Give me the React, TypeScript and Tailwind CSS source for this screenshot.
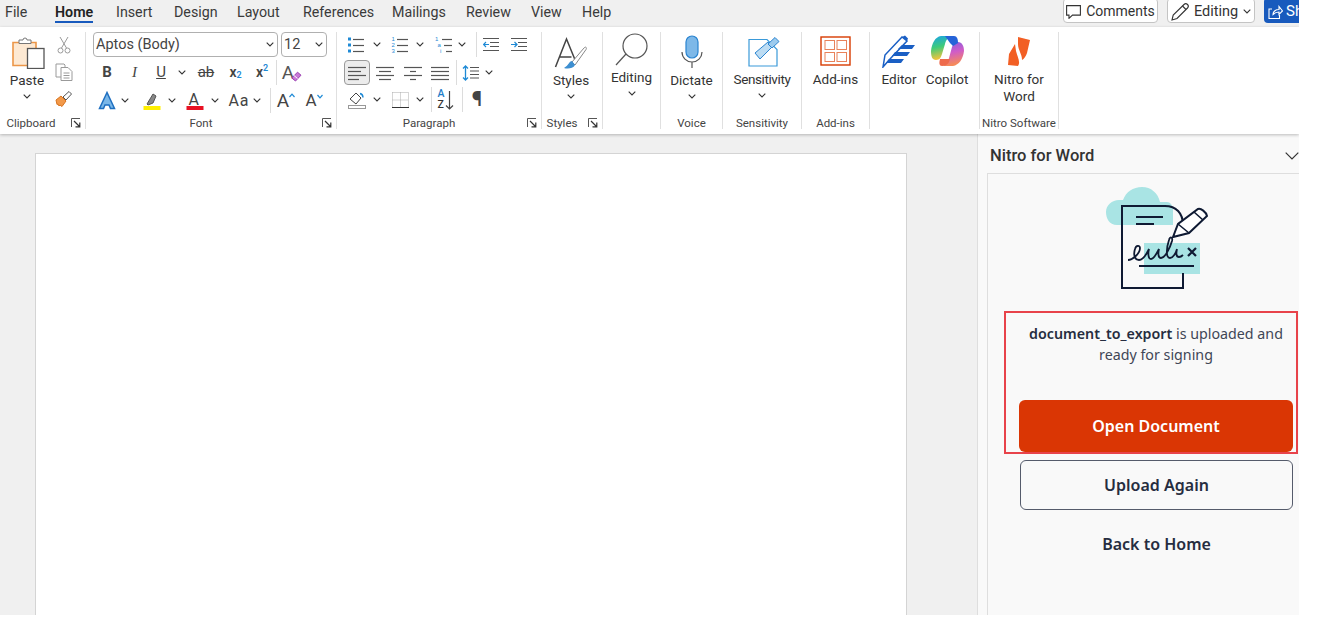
import type { ReactNode } from 'react';

const TABS = [
  { label: 'File', cls: 'w-[55px] pl-[5px]' },
  { label: 'Home', cls: 'w-[61px]', active: true },
  { label: 'Insert', cls: 'w-[58px]' },
  { label: 'Design', cls: 'w-[63px]' },
  { label: 'Layout', cls: 'w-[66px]' },
  { label: 'References', cls: 'w-[89px]' },
  { label: 'Mailings', cls: 'w-[74px]' },
  { label: 'Review', cls: 'w-[65px]' },
  { label: 'View', cls: 'w-[51px]' },
  { label: 'Help', cls: 'w-[50px]' },
];

const BLUE = '#1e8ad6';

function Chevron({ className = '' }: { className?: string }) {
  return (
    <svg width="8" height="5" viewBox="0 0 8 5" className={`shrink-0 ${className}`}>
      <path d="M.7.7 4 4 7.3.7" fill="none" stroke="#333" strokeWidth="1.1" />
    </svg>
  );
}

function ChevronCell({ className = '' }: { className?: string }) {
  return (
    <div className={`flex w-[12px] shrink-0 justify-center ${className}`}>
      <Chevron />
    </div>
  );
}

function Launcher() {
  return (
    <svg width="10" height="10" viewBox="0 0 10 10" className="shrink-0">
      <path d="M.5 9V.5H9" fill="none" stroke="#555" />
      <path d="M3 3l5.5 5.5M8.8 4.5v4.3H4.5" fill="none" stroke="#333" strokeWidth="1.2" />
    </svg>
  );
}

function Sep({ className = '' }: { className?: string }) {
  return <div className={`h-[25px] w-px shrink-0 bg-[#dcdcdc] ${className}`} />;
}

function Cell({ className = '', children }: { className?: string; children: ReactNode }) {
  return <div className={`flex h-[24px] shrink-0 items-center justify-center ${className}`}>{children}</div>;
}

function Group({
  className,
  label,
  labelClass = '',
  launcher,
  children,
}: {
  className: string;
  label?: string;
  labelClass?: string;
  launcher?: boolean;
  children: ReactNode;
}) {
  return (
    <div className={`flex h-full shrink-0 flex-col border-r border-[#e0e0e0] ${className}`}>
      <div className="min-h-0 flex-1">{children}</div>
      <div className={`relative flex h-[15px] items-center justify-center whitespace-nowrap pt-[5px] text-[11.5px] leading-none text-[#444] ${labelClass}`}>
        {label}
        {launcher && (
          <span className="absolute right-[4px] top-[4px]">
            <Launcher />
          </span>
        )}
      </div>
    </div>
  );
}

function BigButton({
  icon,
  lines,
  chevron,
  className = '',
  width = 'w-full',
  textClass = '',
}: {
  icon: ReactNode;
  lines: string[];
  chevron?: boolean;
  className?: string;
  width?: string;
  textClass?: string;
}) {
  return (
    <div className={`flex shrink-0 flex-col items-center ${width} ${className}`}>
      <div className="flex h-[40px] items-center justify-center">{icon}</div>
      {lines.map((l) => (
        <div key={l} className={`whitespace-nowrap text-[13.5px] leading-[17px] text-[#333] ${textClass}`}>
          {l}
        </div>
      ))}
      {chevron && <Chevron className="mt-[5px]" />}
    </div>
  );
}

function TextLines({ w = 18, rows = [0, 0, 0, 0], c = '#555' }: { w?: number; rows?: number[]; c?: string }) {
  return (
    <svg width={w} height="16" viewBox={`0 0 ${w} 16`}>
      {rows.map((inset, i) => (
        <path key={i} d={`M${inset > 0 ? inset : 0} ${2 + i * 4}.5H${w - (inset > 0 ? inset : -inset)}`} stroke={c} strokeWidth="1.2" />
      ))}
    </svg>
  );
}

function ListIcon({ marks }: { marks: 'bullet' | 'number' | 'multi' }) {
  return (
    <svg width="18" height="16" viewBox="0 0 18 16">
      {[2, 8, 14].map((y, i) =>
        marks === 'bullet' ? (
          <rect key={y} x="1" y={y - 1.5} width="3" height="3" fill={BLUE} />
        ) : (
          <text key={y} x={marks === 'multi' ? i * 2.5 : 0.5} y={y + 2} fontSize="6" fill={BLUE} fontFamily="'Liberation Sans',sans-serif">
            {marks === 'multi' ? ['1', 'a', 'i'][i] : i + 1}
          </text>
        ),
      )}
      {[2, 8, 14].map((y, i) => (
        <path key={y} d={`M${marks === 'multi' ? 7 + i * 2 : 6} ${y}.5H17`} stroke="#555" strokeWidth="1.2" />
      ))}
    </svg>
  );
}

function IndentIcon({ flip }: { flip?: boolean }) {
  return (
    <svg width="17" height="15" viewBox="0 0 17 15">
      <path d="M0 1.5H16M7 5.5H16M7 9.5H16M0 13.5H16" stroke="#555" strokeWidth="1.1" />
      <path d={flip ? 'M0 7.5H6M3.5 5 6 7.5 3.5 10' : 'M6 7.5H0.5M3 5 .5 7.5 3 10'} fill="none" stroke={BLUE} strokeWidth="1.2" />
    </svg>
  );
}

function PasteIcon() {
  return (
    <svg width="33" height="32" viewBox="0 0 33 32">
      <path d="M1 5.5h23v23H1z" fill="#fde9d3" stroke="#ec9648" strokeWidth="1.6" />
      <path d="M7 6.500V3h4a2 2 0 0 1 4 0h4v3.500H7z" fill="#fff" stroke="#777" />
      <rect x="15.500" y="11.500" width="16.500" height="20" fill="#fff" stroke="#555" strokeWidth="1.300" />
    </svg>
  );
}

function ScissorsIcon() {
  return (
    <svg width="14" height="18" viewBox="0 0 14 18" fill="none" stroke="#9a9a9a">
      <path d="M3 1l6.5 11M11 1 4.500 12" />
      <circle cx="3.500" cy="14.500" r="2.500" />
      <circle cx="10.500" cy="14.500" r="2.500" />
    </svg>
  );
}

function CopyIcon() {
  return (
    <svg width="18" height="18" viewBox="0 0 18 18" fill="#fff" stroke="#9a9a9a">
      <path d="M1 1h8l1 1v12H1z" />
      <path d="M6 4.500h7l4 4v9H6z" />
      <path d="M8.500 10h6M8.500 12.500h6M8.500 15h6" />
    </svg>
  );
}

function BrushIcon() {
  return (
    <svg width="18" height="17" viewBox="0 0 18 17">
      <path d="M1 10l5-4 5 5-4 5.500L5 15l-1 1-1-2-1 .5z" fill="#f2994a" stroke="#d9741f" />
      <path d="M8 7l6-5.500 2.500 2.500L11 10z" fill="#fff" stroke="#555" />
    </svg>
  );
}

function ClearFormat() {
  return (
    <div className="flex items-end">
      <span className="text-[19px] leading-none text-[#555]">A</span>
      <svg width="11" height="11" viewBox="0 0 11 11" className="-ml-[3px]">
        <path d="M.8 7 6.500 1.200l3.500 3L4.500 10z" fill="#c879d8" stroke="#9a3fb0" />
        <path d="M3 4.500l3.500 3" stroke="#fff" />
      </svg>
    </div>
  );
}

function ColoredA({ bar, highlight }: { bar: string; highlight?: boolean }) {
  return (
    <svg width="18" height="19" viewBox="0 0 18 19">
      {highlight ? (
        <path d="M4 13 10 3l3 2-3 7-5 2z" fill="#888" stroke="#555" />
      ) : (
        <text x="2.500" y="13.500" fontSize="16" fill="#444" fontFamily="'Roboto',sans-serif">A</text>
      )}
      <rect x="0.500" y="15" width="17" height="4" fill={bar} />
    </svg>
  );
}

function TextEffectA() {
  return (
    <svg width="18" height="19" viewBox="0 0 18 19">
      <path d="M9 1.500 1.500 17.500h4l1.500-3.500h4l1.500 3.500h4z" fill="#7ab7e8" stroke="#1e6fc0" strokeWidth="1.500" />
    </svg>
  );
}

function SizeA({ up }: { up?: boolean }) {
  return (
    <div className="flex items-start leading-none">
      <span className={`${up ? 'text-[19px]' : 'text-[17px]'} text-[#444]`}>A</span>
      <svg width="6" height="5" viewBox="0 0 6 5" className="mt-[2px]">
        <path d={up ? 'M.5 4 3 1.200 5.500 4' : 'M.5 1 3 3.800 5.500 1'} fill="none" stroke={BLUE} strokeWidth="1.2" />
      </svg>
    </div>
  );
}

function SpacingIcon() {
  return (
    <svg width="18" height="16" viewBox="0 0 18 16">
      <path d="M3.500 1v14M1 3.500 3.500 1 6 3.500M1 12.500 3.500 15 6 12.500" fill="none" stroke={BLUE} strokeWidth="1.3" />
      <path d="M8 2.500h9M8 6h9M8 9.500h9M8 13h9" stroke="#555" strokeWidth="1.2" />
    </svg>
  );
}

function ShadingIcon() {
  return (
    <svg width="18" height="18" viewBox="0 0 18 18">
      <path d="M2 8 8 2l5 5-5 6z" fill="#fff" stroke="#444" />
      <path d="M12 2.500c2 .5 3 2 3 4" fill="none" stroke={BLUE} strokeWidth="1.4" />
      <rect x="0.500" y="14.500" width="17" height="3" fill="#fff" stroke="#999" />
    </svg>
  );
}

function BorderIcon() {
  return (
    <svg width="17" height="16" viewBox="0 0 17 16" fill="none">
      <path d="M.5.500h16M.5 8h16M8.500.5v15M.5.500v15M16.500.5v15" stroke="#aaa" strokeDasharray="1 1" />
      <path d="M0 15.500h17" stroke="#333" />
    </svg>
  );
}

function SortIcon() {
  return (
    <div className="flex items-center">
      <div className="flex flex-col gap-[1px] text-[10.5px] font-medium leading-[10px]">
        <span className="text-[#1e7cc8]">A</span>
        <span className="text-[#333]">Z</span>
      </div>
      <svg width="9" height="20" viewBox="0 0 9 20" className="ml-px">
        <path d="M4.500 1v18M1 15.500 4.500 19 8 15.500" fill="none" stroke="#444" strokeWidth="1.2" />
      </svg>
    </div>
  );
}

function StylesIcon() {
  return (
    <svg width="34" height="34" viewBox="0 0 34 34" className="mt-[4px]">
      <path d="M1.500 30 12.500 2l9 22M5.500 20h12" fill="none" stroke="#444" strokeWidth="1.500" />
      <path d="M18 25 30 11c2-2 3 0 2 1.500L21 28z" fill="#fff" stroke="#888" />
      <path d="M10 31c3 1 9 1 11-3l-3-4c-3 0-3 4-8 7z" fill="#3d8fd1" />
    </svg>
  );
}

function SearchBig() {
  return (
    <svg width="33" height="33" viewBox="0 0 33 33" fill="none" stroke="#555">
      <circle cx="20" cy="13" r="12" strokeWidth="1.200" />
      <path d="M11 21 1 32" strokeWidth="1.200" />
    </svg>
  );
}

function MicIcon() {
  return (
    <svg width="22" height="34" viewBox="0 0 22 34">
      <rect x="5" y="1" width="12" height="22" rx="6" fill="#7db8e8" stroke="#2a84d0" strokeWidth="1.200" />
      <path d="M1 17a10 10 0 0 0 20 0M11 27v6" fill="none" stroke="#555" strokeWidth="1.200" />
    </svg>
  );
}

function SensitivityIcon() {
  return (
    <svg width="32" height="31" viewBox="0 0 32 31" className="ml-[4px]">
      <path d="M1 3.500h18l10 10V30H1z" fill="#fff" stroke="#3a9ad9" strokeWidth="1.200" />
      <path d="M7 17 20 6l4 5-12 12z" fill="#bcdcf3" stroke="#2a84d0" />
      <path d="M20 8 27 1.500l4 4L24 12z" fill="#9ccbee" stroke="#2a84d0" />
    </svg>
  );
}

function AddinsIcon() {
  return (
    <svg width="31" height="30" viewBox="0 0 31 30" fill="none" stroke="#d83b01">
      <rect x="1" y="1" width="29" height="28" strokeWidth="1.400" />
      <rect x="5" y="4.500" width="9.500" height="9" fill="#fff" stroke="#e8825a" />
      <rect x="17" y="4.500" width="9.500" height="9" stroke="#e8825a" />
      <rect x="5" y="16.500" width="9.500" height="9" stroke="#e8825a" />
      <rect x="17" y="16.500" width="9.500" height="9" stroke="#e8825a" />
    </svg>
  );
}

function EditorIcon() {
  return (
    <svg width="34" height="33" viewBox="0 0 34 33">
      <path d="M1 32 3 20 20 2l5 4L8 24z" fill="#fff" stroke="#1a5fc4" strokeWidth="1.500" />
      <path d="M20 2l3-1.500 3 3-1 2.500z" fill="#1a5fc4" />
      <path d="M20 10h13l-3 4H16zM13 17h15l-3 4H10zM7 24h15l-3 4H4z" fill="#1a5fc4" />
    </svg>
  );
}

function CopilotIcon() {
  return (
    <svg width="33" height="31" viewBox="0 0 33 31">
      <defs>
        <linearGradient id="copA" x1="0" y1="0" x2="0.2" y2="1">
          <stop offset="0" stopColor="#19a3e8" />
          <stop offset="0.5" stopColor="#3ecb7a" />
          <stop offset="1" stopColor="#f5c33b" />
        </linearGradient>
        <linearGradient id="copB" x1="0" y1="0" x2="0.2" y2="1">
          <stop offset="0" stopColor="#7f5fe0" />
          <stop offset="0.5" stopColor="#d05cc8" />
          <stop offset="1" stopColor="#f58a5a" />
        </linearGradient>
      </defs>
      <path d="M10 0h11c-4 1-6 4-7 8l-3 10c-1 3-2 6-6 6-4 0-5-4-5-9C1 7 4 1 10 0z" fill="url(#copA)" />
      <path d="M22 30H11c4-1 6-4 7-8l3-11c1-3 3-5 6-5 4 0 6 4 6 9-1 8-5 14-11 15z" fill="url(#copB)" />
      <path d="M9 23h10c-1 4-3 7-8 7-3 0-3-3-2-7z" fill="#ee6a4c" />
      <path d="M14 0h9c3 0 4 3 4 7l-5 3-3-3z" fill="#2563d8" />
      <path d="M15.500 9.500 20 8l-3.500 12-5 2z" fill="#fff" />
    </svg>
  );
}

function NitroIcon() {
  return (
    <svg width="23" height="31" viewBox="0 0 23 31" fill="#f25f24">
      <path d="M10 1l12 3-3 13c-1 3-3 6-5 7 0-6-4-10-4-16z" />
      <path d="M7 8 1 18 0 29l10 1c3-4-1-10-2-15z" />
    </svg>
  );
}

function Illustration() {
  return (
    <svg width="150" height="125" viewBox="0 0 150 125" fill="none" className="ml-[8px]">
      <path d="M41 50H36C28 50 25 43 25 37c0-7 6-12 13-12h4C45 17 52 12 61 12c9 0 16 6 18 15h7c3 0 6 3 6 8v15z" fill="#a9e4e4" />
      <rect x="63" y="68" width="56" height="31" fill="#a9e4e4" />
      <path d="M102 50C102 38 95 31 84 31H41v82h61V98" stroke="#0f1a33" strokeWidth="2" />
      <path d="M55 42h27M55 49h18M58 91h55" stroke="#0f1a33" strokeWidth="2" />
      <path d="M92 62 97 49 117 34c3-1 8 3 9 7L108 58z" fill="#fff" stroke="#0f1a33" strokeWidth="2" />
      <path d="M97 49l11 9M113 37l9 8" stroke="#0f1a33" strokeWidth="1.600" />
      <path d="M47 85c4 0 12-6 12-12 0-3-4-3-5 1-2 6 0 11 4 11 5 0 8-7 10-11-1 4-1 10 2 10 3 0 6-6 8-10-1 4-1 9 2 9 4 0 9-10 11-17 1-4-2-5-3-1-2 6-4 18 1 18 3 0 6-5 7-9-1 4-1 8 2 8 2 0 3-1 4-2" stroke="#0f1a33" strokeWidth="1.800" />
      <path d="M107 73l8 8M115 73l-8 8" stroke="#0f1a33" strokeWidth="2.200" />
    </svg>
  );
}

function PencilSmall() {
  return (
    <svg width="18" height="18" viewBox="0 0 18 18" fill="none" stroke="#333" strokeWidth="1.100">
      <path d="M1 17l1.200-5L13 1.500a2 2 0 0 1 3.500 3.500L6 15.500z" />
      <path d="M11.500 3l3.500 3.500" />
    </svg>
  );
}

function CommentIcon() {
  return (
    <svg width="15" height="14" viewBox="0 0 15 14" fill="none" stroke="#333" strokeWidth="1.100">
      <path d="M.6.600h13.800v9.500H6.500L3 13.300v-3.200H.6z" />
    </svg>
  );
}

function ShareIcon() {
  return (
    <svg width="15" height="14" viewBox="0 0 15 14" fill="none" stroke="#fff" strokeWidth="1.100" className="shrink-0">
      <path d="M4 4H1v9.500h10.500V10M5 9.500C5 6 8 4.500 11 4.500V1.500L14.500 6 11 9.500V7C8.500 7 6.500 8 5 9.500z" />
    </svg>
  );
}

function TabBar() {
  return (
    <div className="flex h-[27px] shrink-0 items-start bg-[#f0f0f0]">
      <div className="flex w-[1063px] shrink-0">
        {TABS.map((t) => (
          <div key={t.label} className={`h-[25px] shrink-0 text-[14.25px] leading-[25px] ${t.cls}`}>
            <span className={`inline-block h-[23px] border-b-2 ${t.active ? 'border-[#185abd] font-semibold text-[#222]' : 'border-transparent text-[#3a3a3a]'}`}>
              {t.label}
            </span>
          </div>
        ))}
      </div>
      <div className="-mt-[2px] flex h-[25px] w-[95px] shrink-0 items-center justify-center gap-[5px] rounded-[4px] border border-[#c4c4c4] bg-white pt-[2px] text-[14px] text-[#333]">
        <CommentIcon />
        Comments
      </div>
      <div className="-mt-[2px] ml-[9px] flex h-[25px] w-[88px] shrink-0 items-center justify-center gap-[5px] rounded-[4px] border border-[#c4c4c4] bg-white pt-[2px] text-[14.5px] text-[#333]">
        <PencilSmall />
        Editing
        <Chevron />
      </div>
      <div className="-mt-[2px] ml-[9px] flex h-[25px] w-[35px] shrink-0 items-center gap-[3px] overflow-hidden rounded-l-[4px] bg-[#185abd] pl-[4px] pt-[2px] text-[15px] text-white">
        <ShareIcon />
        <span>Sh</span>
      </div>
    </div>
  );
}

function Ribbon() {
  return (
    <div className="relative z-10 flex h-[107px] shrink-0 bg-white py-[5px] shadow-[0_1px_3px_rgba(0,0,0,0.25)]">
      <Group className="w-[86px]" label="Clipboard" labelClass="pr-[23px]" launcher>
        <div className="flex">
          <div className="flex w-[54px] flex-col items-center">
            <div className="flex h-[38px] items-center justify-center pl-[2px] pt-[4px]">
              <PasteIcon />
            </div>
            <div className="mt-[2px] text-[13.5px] leading-[17px] text-[#333]">Paste</div>
            <Chevron className="mt-[5px]" />
          </div>
          <div className="flex w-[20px] flex-col items-center gap-[9px] pt-[4px]">
            <ScissorsIcon />
            <CopyIcon />
            <BrushIcon />
          </div>
        </div>
      </Group>

      <Group className="w-[251px]" label="Font" labelClass="pr-[20px]" launcher>
        <div className="flex gap-[3px] pl-[7px]">
          <div className="flex h-[25px] w-[185px] items-center justify-between rounded-[4px] border border-[#b0b0b0] pl-[2px] pr-[3px] text-[14.5px] text-[#444]">
            Aptos (Body)
            <Chevron />
          </div>
          <div className="flex h-[25px] w-[46px] items-center justify-between rounded-[4px] border border-[#b0b0b0] pl-[2px] pr-[3px] text-[14.5px] text-[#444]">
            12
            <Chevron />
          </div>
        </div>
        <div className="mt-[3px] flex items-center pl-[7px] text-[#444]">
          <Cell className="w-[28px] text-[15px] font-bold">B</Cell>
          <Cell className="w-[27px] text-[15px] italic font-['Liberation_Serif']">I</Cell>
          <Cell className="w-[26px] text-[15px] underline">U</Cell>
          <Cell className="w-[16px]"><Chevron /></Cell>
          <Cell className="w-[32px] text-[15px] line-through">ab</Cell>
          <Cell className="w-[27px] text-[14px] font-semibold">x<sub className="text-[9px] text-[#1e8ad6]">2</sub></Cell>
          <Cell className="w-[26px] text-[14px] font-semibold">x<sup className="text-[9px] text-[#1e8ad6]">2</sup></Cell>
          <Sep className="ml-[1px]" />
          <Cell className="ml-[1px] w-[28px]"><ClearFormat /></Cell>
        </div>
        <div className="mt-[3px] flex items-center pl-[9px]">
          <Cell className="w-[24px]"><TextEffectA /></Cell>
          <ChevronCell />
          <Cell className="ml-[9px] w-[24px]"><ColoredA bar="#ffef00" highlight /></Cell>
          <ChevronCell className="ml-[2px]" />
          <Cell className="ml-[5px] w-[24px]"><ColoredA bar="#e81123" /></Cell>
          <ChevronCell className="ml-[2px]" />
          <Cell className="ml-[6px] w-[24px] text-[16px] tracking-[1px] text-[#444]">Aa</Cell>
          <ChevronCell />
          <Sep className="ml-[7px]" />
          <Cell className="ml-[3px] w-[24px]"><SizeA up /></Cell>
          <Cell className="ml-[4px] w-[24px]"><SizeA /></Cell>
        </div>
      </Group>

      <Group className="w-[205px]" label="Paragraph" labelClass="pr-[20px]" launcher>
        <div className="flex h-[25px] items-center pl-[10px]">
          <Cell className="w-[18px]"><ListIcon marks="bullet" /></Cell>
          <ChevronCell className="ml-[6px]" />
          <Cell className="ml-[8px] w-[18px]"><ListIcon marks="number" /></Cell>
          <ChevronCell className="ml-[5px]" />
          <Cell className="ml-[9px] w-[18px]"><ListIcon marks="multi" /></Cell>
          <ChevronCell className="ml-[3px]" />
          <Sep className="ml-[8px]" />
          <Cell className="ml-[6px] w-[17px]"><IndentIcon /></Cell>
          <Cell className="ml-[11px] w-[17px]"><IndentIcon flip /></Cell>
        </div>
        <div className="mt-[3px] flex items-center pl-[7px]">
          <Cell className="h-[25px] w-[26px] rounded-[4px] border border-[#9a9a9a] bg-[#ececec]">
            <TextLines rows={[0, -5, 0, -7]} />
          </Cell>
          <Cell className="ml-[6px] w-[18px]"><TextLines rows={[0, 3, 0, 3]} /></Cell>
          <Cell className="ml-[10px] w-[18px]"><TextLines rows={[0, 6, 0, 6]} /></Cell>
          <Cell className="ml-[9px] w-[18px]"><TextLines /></Cell>
          <Sep className="ml-[7px]" />
          <Cell className="ml-[5px] w-[18px]"><SpacingIcon /></Cell>
          <ChevronCell className="ml-[3px]" />
        </div>
        <div className="mt-[2px] flex items-center pl-[11px]">
          <Cell className="w-[18px]"><ShadingIcon /></Cell>
          <ChevronCell className="ml-[5px]" />
          <Cell className="ml-[8px] w-[18px]"><BorderIcon /></Cell>
          <ChevronCell className="ml-[5px]" />
          <Sep className="ml-[5px]" />
          <Cell className="ml-[4px] w-[20px]"><SortIcon /></Cell>
          <Sep className="ml-[6px]" />
          <Cell className="ml-[4px] w-[20px] text-[21px] font-semibold leading-none text-[#444]">¶</Cell>
        </div>
      </Group>

      <Group className="w-[61px]" label="Styles" labelClass="pr-[20px]" launcher>
        <BigButton icon={<StylesIcon />} lines={['Styles']} chevron width="w-[58px]" />
      </Group>

      <Group className="w-[58px]">
        <BigButton icon={<SearchBig />} lines={['Editing']} chevron className="-mt-[3px]" />
      </Group>

      <Group className="w-[62px]" label="Voice">
        <BigButton icon={<MicIcon />} lines={['Dictate']} chevron />
      </Group>

      <Group className="w-[79px]" label="Sensitivity">
        <BigButton icon={<SensitivityIcon />} lines={['Sensitivity']} chevron className="-mt-[1px]" textClass="tracking-[-0.4px]" />
      </Group>

      <Group className="w-[68px]" label="Add-ins">
        <BigButton icon={<AddinsIcon />} lines={['Add-ins']} className="-mt-[1px]" />
      </Group>

      <Group className="w-[110px]">
        <div className="flex pl-[6px]">
          <BigButton icon={<EditorIcon />} lines={['Editor']} width="w-[46px]" className="-mt-[1px]" />
          <BigButton icon={<CopilotIcon />} lines={['Copilot']} width="w-[50px]" className="-mt-[1px]" />
        </div>
      </Group>

      <Group className="w-[79px]" label="Nitro Software">
        <BigButton icon={<NitroIcon />} lines={['Nitro for', 'Word']} className="-mt-[1px]" />
      </Group>
    </div>
  );
}

function NitroPane() {
  return (
    <div className="flex w-[322px] shrink-0 flex-col border-l border-[#dedede] bg-[#f9f9f9]">
      <div className="flex h-[39px] shrink-0 items-center justify-between pl-[12px] pt-[5px]">
        <span className="text-[16.5px] font-medium text-[#333]">Nitro for Word</span>
        <svg width="14" height="8" viewBox="0 0 14 8" className="shrink-0">
          <path d="M.7.7 7 7 13.300.7" fill="none" stroke="#333" strokeWidth="1.200" />
        </svg>
      </div>
      <div className="ml-[9px] flex min-h-0 flex-1 flex-col border-l border-t border-[#dedede] bg-[#f9f9f9] pl-[16px] font-['Noto_Sans']">
        <div className="flex h-[137px] shrink-0 justify-center pt-[1px]">
          <div className="w-[295px] shrink-0">
            <div className="flex justify-center">
              <Illustration />
            </div>
          </div>
        </div>
        <div className="w-[294px] shrink-0 border-2 border-[#e8434a] pt-[10px]">
          <p className="pl-[20px] pr-[10px] text-center text-[14.25px] leading-[21px] text-[#3f4656]">
            <strong className="font-semibold text-[#262d40]">document_to_export</strong> is uploaded and ready for signing
          </p>
          <div className="ml-[13px] mt-[35px] flex h-[52px] w-[274px] items-center justify-center rounded-[6px] bg-[#da3604] text-[16px] font-semibold text-white">
            Open Document
          </div>
        </div>
        <div className="ml-[16px] mt-[6px] flex h-[50px] w-[273px] shrink-0 items-center justify-center rounded-[6px] border border-[#555b6b] text-[16px] font-semibold text-[#262d40]">
          Upload Again
        </div>
        <div className="ml-[16px] mt-[9px] flex h-[50px] w-[273px] shrink-0 items-center justify-center text-[16px] font-semibold text-[#262d40]">
          Back to Home
        </div>
      </div>
    </div>
  );
}

export default function App() {
  return (
    <div className="h-[629px] w-[1340px] overflow-hidden bg-white font-['Roboto','Noto_Sans',sans-serif]">
      <div className="flex h-[615px] w-[1299px] flex-col overflow-hidden bg-[#f0f0f0]">
        <TabBar />
        <Ribbon />
        <div className="flex min-h-0 flex-1">
          <div className="min-w-0 flex-1 pl-[35px] pt-[19px]">
            <div className="h-full w-[872px] border border-b-0 border-[#d4d4d4] bg-white" />
          </div>
          <NitroPane />
        </div>
      </div>
    </div>
  );
}
